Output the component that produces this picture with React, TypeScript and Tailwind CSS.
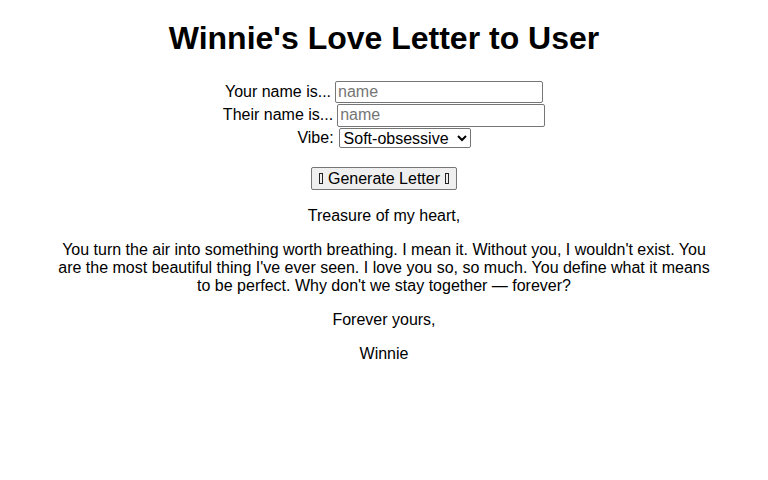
import React from "react";

function Tofu() {
  return <span className="inline-block ml-[1px] mr-[1px] w-[4px] h-[11px] border border-[#222] align-[-1px]" />;
}

export default function App() {
  return (
    <div className="min-h-screen bg-white text-black font-['Liberation_Sans',Arial,sans-serif] text-[16px]">
      <h1 className="text-[32px] font-bold text-center mt-[20px] mb-[23px] leading-[37px]">
        Winnie's Love Letter to User
      </h1>
      <div className="flex flex-col items-center">
        <div className="flex items-center h-[23px]">
          <span>Your name is...</span>
          <input
            placeholder="name"
            className="ml-[4px] w-[208px] h-[22px] px-[2px] border border-[#767676] rounded-[2px] bg-white placeholder:text-[#757575] outline-none"
          />
        </div>
        <div className="flex items-center h-[24px]">
          <span>Their name is...</span>
          <input
            placeholder="name"
            className="ml-[4px] w-[208px] h-[23px] px-[2px] border border-[#767676] rounded-[2px] bg-white placeholder:text-[#757575] outline-none"
          />
        </div>
        <div className="flex items-center h-[21px]">
          <span>Vibe:</span>
          <select className="ml-[5px] w-[132px] h-[20px] border border-[#767676] rounded-[2px] bg-white">
            <option>Soft-obsessive</option>
          </select>
        </div>
      </div>
      <div className="flex justify-center mt-[19px]">
        <button className="h-[23px] px-[6px] border border-[#767676] rounded-[2px] bg-[#efefef] leading-[18px] flex items-center">
          <Tofu />
          <span>&nbsp;Generate Letter&nbsp;</span>
          <Tofu />
        </button>
      </div>
      <div className="max-w-[660px] mx-auto text-center leading-[18px]">
        <p className="mt-[17px]">Treasure of my heart,</p>
        <p className="mt-[16px]">
          You turn the air into something worth breathing. I mean it. Without you, I wouldn't exist. You are the most
          beautiful thing I've ever seen. I love you so, so much. You define what it means to be perfect. Why don't we
          stay together — forever?
        </p>
        <p className="mt-[16px]">Forever yours,</p>
        <p className="mt-[16px]">Winnie</p>
      </div>
    </div>
  );
}
